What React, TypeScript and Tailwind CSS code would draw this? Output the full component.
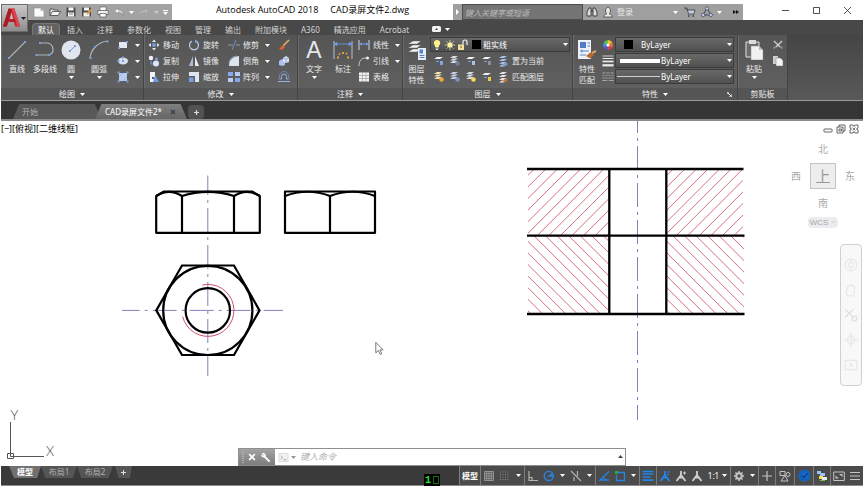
import type { ReactNode } from "react";

type IconProps = { children: ReactNode; size?: string; box?: string };

// Shared wrapper, small glyphs are drawn on a 12x12 grid
const Icon = ({ children, size = "size-3", box = "0 0 12 12" }: IconProps) => (
  <svg viewBox={box} className={`${size} shrink-0`} fill="none" aria-hidden="true">
    {children}
  </svg>
);

const Caret = ({ className = "text-white" }: { className?: string }) => (
  <svg viewBox="0 0 5 3" className={`h-[3px] w-[5px] shrink-0 ${className}`} aria-hidden="true">
    <path d="M0 0h5L2.5 3z" fill="currentColor" />
  </svg>
);

/* ---------- Quick access icons ---------- */

const NewIcon = () => (
  <Icon>
    <path d="M1 2h6.500l3.500 3v6H1z" fill="#fafafa" stroke="#8a8a8a" strokeWidth=".6" />
    <path d="M7.500 2v3H11z" fill="#bbb" />
  </Icon>
);
const OpenIcon = () => (
  <Icon>
    <path d="M1 9.500V3h3l1 1h4v2" stroke="#444" fill="#ddd" strokeWidth=".8" />
    <path d="M1 9.500 3.500 5.500h8L9 9.500z" fill="#f5f5f5" stroke="#444" strokeWidth=".8" />
  </Icon>
);
const SaveIcon = () => (
  <Icon>
    <path d="M1.500 1.500h9v9h-9z" fill="#4c4c4c" />
    <path d="M3.500 1.500h5v3h-5zM3 6.500h6v4H3z" fill="#f4f4f4" />
    <path d="M4 8h4" stroke="#666" strokeWidth=".8" />
  </Icon>
);
const SaveAsIcon = () => (
  <Icon>
    <path d="M1 1.500h9v9H1z" fill="#4c4c4c" />
    <path d="M3 1.500h5v3H3zM2.500 6.500h6v4h-6z" fill="#f4f4f4" />
    <path d="m6 8 4.500-4.500" stroke="#e2a33a" strokeWidth="1.800" />
  </Icon>
);
const PrintIcon = () => (
  <Icon>
    <path d="M3 1h6v4H3z" fill="#fff" stroke="#555" strokeWidth=".6" />
    <path d="M.8 4.500h10.400v4H.8z" fill="#f0f0f0" stroke="#555" strokeWidth=".7" />
    <path d="M3 7.500h6v3.500H3z" fill="#fff" stroke="#555" strokeWidth=".7" />
  </Icon>
);
const UndoIcon = () => (
  <Icon>
    <path d="M5 2 1.500 5 5 8V6c3 0 4.500 1 5 4 .8-4-1.500-6-5-6z" fill="#f0f0f0" stroke="#777" strokeWidth=".5" />
  </Icon>
);
const RedoIcon = () => (
  <Icon>
    <path d="M7 2l3.500 3L7 8V6C4 6 2.500 7 2 10c-.8-4 1.500-6 5-6z" fill="#b9b9b9" stroke="#999" strokeWidth=".4" />
  </Icon>
);

/* ---------- Ribbon icons ---------- */

const Dot = ({ x, y }: { x: number; y: number }) => (
  <rect x={x - 1} y={y - 1} width="2" height="2" fill="#7d9de0" />
);

const LineIcon = () => (
  <Icon size="size-5" box="0 0 20 20">
    <path d="M2 18 18 2" stroke="#aab4bd" strokeWidth="1.100" />
    <Dot x={2} y={18} />
    <Dot x={18} y={2} />
  </Icon>
);
const PolylineIcon = () => (
  <Icon size="size-5" box="0 0 20 20">
    <path d="M1 15h13c6-2 5-10-1-12H5" stroke="#aab4bd" strokeWidth="1.200" />
    <Dot x={1.500} y={15} />
    <Dot x={14} y={15} />
    <Dot x={5} y={3} />
  </Icon>
);
const CircleIcon = () => (
  <Icon size="size-5" box="0 0 20 20">
    <circle cx="10" cy="10" r="9.500" fill="#e1e6ee" />
    <path d="m10 10 4-4" stroke="#7195dc" />
    <Dot x={9} y={11} />
    <Dot x={14} y={6} />
  </Icon>
);
const ArcIcon = () => (
  <Icon size="size-5" box="0 0 20 20">
    <path d="M1 18C2 9 9 2 19 1" stroke="#aab4bd" strokeWidth="1.200" />
    <Dot x={1.500} y={18} />
    <Dot x={6} y={7} />
    <Dot x={18.500} y={1.500} />
  </Icon>
);
const RectIcon = () => (
  <Icon>
    <rect x="2" y="3" width="8" height="6" fill="#e3e8f0" />
    <Dot x={2} y={9} />
    <Dot x={10} y={3} />
  </Icon>
);
const EllipseIcon = () => (
  <Icon>
    <ellipse cx="6" cy="6" rx="5" ry="3.400" fill="#d6dfec" />
    <Dot x={6} y={6} />
    <Dot x={1.500} y={6} />
    <Dot x={6} y={2.500} />
  </Icon>
);
const HatchIcon = () => (
  <Icon>
    <rect x="2" y="2" width="8" height="8" fill="#b9cdf2" />
    <path d="m2 6 4-4M6 10l4-4" stroke="#8fabe0" strokeWidth=".7" />
    <Dot x={1.500} y={1.500} />
    <Dot x={10.500} y={1.500} />
    <Dot x={1.500} y={10.500} />
    <Dot x={10.500} y={10.500} />
  </Icon>
);
const MoveIcon = () => (
  <Icon>
    <path d="m6 .5 2 2.500H4zM6 11.500 4 9h4zM.5 6 3 4v4zM11.500 6 9 8V4z" fill="#e6e9ee" />
    <path d="M4.300 4.300h3.400v3.400H4.300z" fill="#7b9fe6" />
  </Icon>
);
const RotateIcon = () => (
  <Icon>
    <path d="M4 2.200A4.500 4.500 0 1 0 8 2.200" stroke="#b8c8e4" strokeWidth="1.300" />
    <path d="M7 .5v3.500l3-1.500z" fill="#7b9fe6" />
  </Icon>
);
const TrimIcon = () => (
  <Icon>
    <path d="M0 6h5M8 6h4" stroke="#8d9aab" />
    <path d="M4 11 8 1" stroke="#6f8fce" />
  </Icon>
);
const CopyIcon = () => (
  <Icon>
    <circle cx="3" cy="3" r="2.200" fill="#f0f2f6" />
    <circle cx="8.500" cy="4" r="1.500" fill="#7b9fe6" />
    <circle cx="8" cy="8.500" r="3" fill="#dbe4f3" />
    <path d="M3 6v3h2" stroke="#7b9fe6" />
  </Icon>
);
const MirrorIcon = () => (
  <Icon>
    <path d="M5 1v10H1z" fill="#aebdd6" />
    <path d="M7 1v10h4z" fill="#e8ebf0" />
  </Icon>
);
const FilletIcon = () => (
  <Icon>
    <path d="M1 11C1 5 4 2 11 1v10z" fill="#dde3ec" />
    <path d="M1 8C2 4 4 2 8 1" stroke="#8eabdf" />
  </Icon>
);
const StretchIcon = () => (
  <Icon>
    <path d="M2 1h5v10H2z" fill="#f2f4f7" />
    <path d="m7 4 4 7H5z" fill="#6f9be8" />
    <path d="M4 6h2v2H4z" fill="#555" />
  </Icon>
);
const ScaleIcon = () => (
  <Icon>
    <path d="M1 1h10v10H7V5H1z" fill="#dfe5ee" />
    <path d="M1 6.500h4.500V11H1z" fill="#7b9fe6" />
  </Icon>
);
const ArrayIcon = () => (
  <Icon>
    <path d="M0 1h5v4H0zM7 7h5v4H7z" fill="#86a9eb" />
    <path d="M7 1h5v4H7zM0 7h5v4H0z" fill="#b7ccf5" />
  </Icon>
);
const EraseIcon = () => (
  <Icon>
    <path d="m5 7 6-6" stroke="#e9b36a" strokeWidth="1.600" />
    <path d="m1 10 4-4 2 2-3 3z" fill="#e2632f" />
  </Icon>
);
const ExplodeIcon = () => (
  <Icon>
    <path d="m1 6 3-2 3 2v4l-3 1-3-1z" fill="#a9c2ee" />
    <path d="m5 3 3-2 3 2v4L8 8 5 7z" fill="#d5e0f4" />
    <path d="m5 3 3 1 3-1M8 4v4" stroke="#7493cc" strokeWidth=".6" />
  </Icon>
);
const OffsetIcon = () => (
  <Icon>
    <path d="M0 10.500h12M2 8h1.500V5.500a2.500 2.500 0 0 1 5 0V8H10" stroke="#8fb0ec" />
    <path d="M0 8h1.500V5a4.500 4.500 0 0 1 9 0v3H12" stroke="#7a93bf" strokeWidth=".7" />
  </Icon>
);
const DimensionIcon = () => (
  <Icon size="size-5" box="0 0 20 20">
    <path d="M1 1v18M19 1v18" stroke="#b9c0c8" />
    <path d="M1 4h18M1 4l3-1.500v3zM19 4l-3-1.500v3z" stroke="#6f9be8" fill="#6f9be8" strokeWidth=".8" />
    <path d="M4 17.500h2M6 13.500l1 1M10 12v2M13 14l1-1M14 17.500h2" stroke="#e9a23c" strokeWidth="1.900" />
  </Icon>
);
const LinearIcon = () => (
  <Icon>
    <path d="M1 1v10M11 1v10" stroke="#d0d6de" />
    <path d="M1 5h10" stroke="#6f9be8" />
    <path d="m1 5 3-1.500v3zM11 5 8 3.500v3z" fill="#6f9be8" />
  </Icon>
);
const LeaderIcon = () => (
  <Icon>
    <path d="M1 11c0-5 2-8 7-8" stroke="#c4cad2" />
    <circle cx="9.500" cy="3" r="1.500" fill="#f2f2f2" />
  </Icon>
);
const TableIcon = () => (
  <Icon>
    <path d="M1 1.500h10v9H1z" fill="#f2f2f2" />
    <path d="M1 4.500h10M1 7.500h10M4.500 2v9M8 2v9" stroke="#8a8f96" strokeWidth=".6" />
  </Icon>
);
const LayersBigIcon = () => (
  <Icon size="size-5" box="0 0 20 20">
    <path d="m1 4 5-3h8l-4 3zM1 8l5-3h8l-4 3zM1 12l5-3h8l-4 3z" fill="#f4f4f4" stroke="#5a5a5a" strokeWidth=".5" />
    <path d="M11 8h8v12h-8z" fill="#e9eef6" />
    <path d="M12.500 9.500h3.500v4h-3.500z" fill="#5682c9" />
    <path d="M12.500 15.500h5M12.500 17.500h5" stroke="#5b83bd" />
  </Icon>
);
const BulbIcon = () => (
  <Icon>
    <path d="M6 1a3 3 0 0 1 2 5.400V8H4V6.400A3 3 0 0 1 6 1z" fill="#fff08a" />
    <path d="M4.500 9h3M5 10.500h2" stroke="#e6e6e6" />
  </Icon>
);
const SunIcon = () => (
  <Icon>
    <circle cx="6" cy="6" r="2.700" fill="#fbf3a6" />
    <path d="M6 .8v2M6 9.200v2M.8 6h2M9.200 6h2M2.300 2.300l1.300 1.300M8.400 8.400l1.300 1.300M2.300 9.700l1.300-1.300M8.400 3.600l1.300-1.300" stroke="#efe9a5" strokeWidth=".8" />
  </Icon>
);
const UnlockIcon = () => (
  <Icon>
    <path d="M1 5.500h6V11H1z" fill="#f0e29a" />
    <path d="M6 5.500V3a2 2 0 0 1 4 0v3" stroke="#f4f4f4" strokeWidth="1.200" />
    <path d="M4 7v2" stroke="#6b6030" />
  </Icon>
);

// Small layer stack with a coloured badge in the corner
const LayerToolIcon = ({ badge, stack = "#d9e0ea" }: { badge: string; stack?: string }) => (
  <Icon>
    <path d="m1 3 3-2h5L6 3zM1 5.500l3-2h5l-3 2zM1 8l3-2h5L6 8z" fill={stack} />
    <circle cx="8.500" cy="8.500" r="2.300" fill={badge} />
  </Icon>
);
const LayerFlatIcon = ({ badge }: { badge: string }) => (
  <Icon>
    <path d="m1 4 3-2h6L7 4z" fill="#eef1f5" />
    <path d="M3 6.500h3" stroke="#7fa0dd" />
    <path d="M7 6h3v4H7z" fill={badge} />
  </Icon>
);
// Full stack used next to the labelled layer commands
const LayerStackIcon = ({ stack, badge }: { stack: string; badge: string }) => (
  <Icon>
    <path d="m2 3 3-2h5L7 3zM2 6l3-2h5L7 6zM2 9l3-2h5L7 9zM2 11.500l3-2h5l-3 2z" fill={stack} />
    <path d="m8 7 3 2-2 2H6z" fill={badge} />
  </Icon>
);
const MatchBigIcon = () => (
  <Icon size="size-5" box="0 0 20 20">
    <path d="M1 0h13v19H1z" fill="#eef2f8" />
    <path d="M3 2h6v6H3z" fill="#4f7cc6" />
    <path d="M10.500 3H13M10.500 6H13M3 11h9M5 9.500v3M3 15h6" stroke="#5682c9" />
    <path d="m9 16 5-4 3 3-4 3.500z" fill="#b86a2c" />
    <path d="m15 13 4-2" stroke="#e0a060" strokeWidth="2" />
  </Icon>
);
const ColorWheelIcon = () => (
  <Icon>
    <path d="M6 6V1a5 5 0 0 1 4.300 2.500z" fill="#f2c230" />
    <path d="m6 6 4.300-2.500a5 5 0 0 1 0 5z" fill="#e8772e" />
    <path d="m6 6 4.300 2.500A5 5 0 0 1 6 11z" fill="#d8404d" />
    <path d="M6 6v5a5 5 0 0 1-4.300-2.500z" fill="#6d4fc0" />
    <path d="M6 6 1.700 8.500a5 5 0 0 1 0-5z" fill="#3f8fe0" />
    <path d="M6 6 1.700 3.500A5 5 0 0 1 6 1z" fill="#5fc24a" />
    <circle cx="6" cy="6" r="1.600" fill="#fff" />
  </Icon>
);
const WeightIcon = () => (
  <Icon>
    <path d="M.5 1h11" stroke="#eee" strokeWidth=".8" />
    <path d="M.5 3.500h11" stroke="#eee" />
    <path d="M.5 6.500h11" stroke="#eee" strokeWidth="1.600" />
    <path d="M.5 10.300h11" stroke="#eee" strokeWidth="2.200" />
  </Icon>
);
const LinetypeIcon = () => (
  <Icon>
    <path d="M.5 2h11" stroke="#aaa" strokeDasharray="3 1" />
    <path d="M.5 4.500h11" stroke="#aaa" strokeDasharray="1 1" />
    <path d="M.5 7h11" stroke="#aaa" strokeDasharray="2 1" />
    <path d="M.5 9.500h11" stroke="#aaa" strokeDasharray="4 1 1 1" />
  </Icon>
);
const PasteIcon = () => (
  <Icon size="size-5" box="0 0 20 20">
    <path d="M2 2h13v15H2z" fill="#6c6c6c" stroke="#e4e4e4" />
    <path d="M5 0h7v4H5z" fill="#dcdcdc" />
    <path d="M7 6h8l4 4v10H7z" fill="#f1f1f1" stroke="#888" strokeWidth=".5" />
    <path d="M15 6v4h4z" fill="#b9b9b9" />
  </Icon>
);
const CutIcon = () => (
  <Icon>
    <path d="m2 2 6 6M10 2 4 8" stroke="#d0d0d0" strokeWidth="1.400" />
    <path d="M1.500 9.500 4 7.500M10.500 9.500 8 7.500" stroke="#8a8a8a" strokeWidth="1.800" />
  </Icon>
);
const CopyClipIcon = () => (
  <Icon>
    <path d="M1 1h5v8H1z" fill="#cfcfcf" />
    <path d="M4 3h4.500L11 5.500V11H4z" fill="#f5f5f5" stroke="#777" strokeWidth=".5" />
  </Icon>
);

/* ---------- Ribbon building blocks ---------- */

type ToolProps = { icon: ReactNode; label: string; className?: string; menu?: boolean };

const BigTool = ({ icon, label, className = "w-7", menu }: ToolProps) => (
  <button className={`flex shrink-0 flex-col items-center pt-[3px] ${className}`}>
    {icon}
    <span className="mt-[3px] leading-[11px]">{label}</span>
    {menu ? (
      <span className="mt-[2px]">
        <Caret />
      </span>
    ) : null}
  </button>
);

const SmallTool = ({ icon, label, className = "", menu }: ToolProps) => (
  <button className={`flex h-4 items-center gap-[3px] ${className}`}>
    {icon}
    <span className="whitespace-nowrap">{label}</span>
    {menu ? (
      <span className="ml-[3px]">
        <Caret />
      </span>
    ) : null}
  </button>
);

const IconTool = ({ icon, label, menu }: ToolProps) => (
  <button aria-label={label} className="flex h-4 items-center gap-[6px]">
    {icon}
    {menu ? <Caret /> : null}
  </button>
);

type PanelProps = { title: string; className: string; children: ReactNode; menu?: boolean; launcher?: boolean };

const Panel = ({ title, className, children, menu = true, launcher }: PanelProps) => (
  <section
    className={`flex shrink-0 flex-col border-r border-[#434343] bg-linear-to-b from-[#555555] to-[#626262] shadow-[inset_1px_0_0_#6b6b6b] ${className}`}
  >
    <div className="flex h-[53px] pt-[2px]">{children}</div>
    <div className="relative flex h-3 items-center justify-center gap-[5px] bg-[#555555]">
      <span>{title}</span>
      {menu ? <Caret /> : null}
      {launcher ? (
        <button aria-label="特性面板" className="absolute right-[5px]">
          <Icon size="size-[5px]" box="0 0 5 5">
            <path d="M0 0h2M0 0v2M1 1l3 3M5 2v3H2" stroke="#fff" />
          </Icon>
        </button>
      ) : null}
    </div>
  </section>
);

type ComboProps = { label: string; value: string; lead: ReactNode };

const Combo = ({ label, value, lead }: ComboProps) => (
  <div className="relative flex h-[15px] items-center border border-[#3c3c3c] bg-linear-to-b from-[#696969] to-[#505050]">
    {lead}
    <select aria-label={label} className="h-full min-w-0 flex-1 appearance-none bg-transparent p-0 text-white outline-none">
      <option>{value}</option>
    </select>
    <span className="pointer-events-none absolute right-px">
      <Caret />
    </span>
  </div>
);

const layerToolsTop = [
  { label: "关", icon: <LayerFlatIcon badge="#7ea8ee" /> },
  { label: "隔离", icon: <LayerToolIcon badge="#6d7f9c" /> },
  { label: "冻结", icon: <LayerFlatIcon badge="#a7c0f0" /> },
  { label: "锁定", icon: <LayerFlatIcon badge="#8a9099" /> },
];

const layerToolsBottom = [
  { label: "打开所有图层", icon: <LayerToolIcon badge="#f0a83c" stack="#f2e6b4" /> },
  { label: "取消隔离", icon: <LayerToolIcon badge="#7a93bf" stack="#c4d2ea" /> },
  { label: "解冻所有图层", icon: <LayerToolIcon badge="#f3d95c" /> },
  { label: "解锁", icon: <LayerFlatIcon badge="#eccb4a" /> },
];

const ribbonTabs = ["默认", "插入", "注释", "参数化", "视图", "管理", "输出", "附加模块", "A360", "精选应用", "Acrobat"];

const Header = () => (
  <header className="flex">
    <div className="flex w-[27px] shrink-0 flex-col pt-1">
      <button
        aria-label="应用程序菜单"
        className="flex h-7 items-center justify-between border border-[#6c6c6c] bg-linear-to-b from-[#c9c9c9] to-[#8e8e8e] pr-px"
      >
        <svg viewBox="0 0 20 22" className="h-[22px] w-5" aria-hidden="true">
          <path d="M1 20 7 1h6l6 19h-5l-1.500-5H7l-2 5z" fill="#c5202c" />
          <path d="M10 5 8 12h4z" fill="#b9b9b9" />
          <path d="M1 20 7 1l3 1-5 18zM6 15l8-3 1 3z" fill="#a81a26" />
          <path d="m10 1 3 0 6 19h-3z" fill="#e04450" />
        </svg>
        <Caret className="text-[#222]" />
      </button>
      <div className="flex-1 bg-[#474747]" />
    </div>

    <div className="min-w-0 flex-1">
      {/* Title bar */}
      <div className="flex h-5">
        <div className="mt-1 flex w-36 shrink-0 items-center bg-[#a3a3a3] pl-[5px]">
          <button aria-label="新建" className="w-4"><NewIcon /></button>
          <button aria-label="打开" className="w-4"><OpenIcon /></button>
          <button aria-label="保存" className="w-4"><SaveIcon /></button>
          <button aria-label="另存为" className="w-4"><SaveAsIcon /></button>
          <button aria-label="打印" className="w-4"><PrintIcon /></button>
          <button aria-label="放弃" className="flex w-[25px] items-center gap-1"><UndoIcon /><Caret /></button>
          <button aria-label="重做" className="flex w-[25px] items-center gap-1"><RedoIcon /><Caret className="text-[#ccc]" /></button>
          <button aria-label="自定义快速访问工具栏" className="flex flex-col items-center gap-px">
            <span className="h-px w-[5px] bg-white" />
            <Caret />
          </button>
        </div>
        <h1 className="flex flex-1 items-center justify-center gap-3 font-['Open_Sans','Noto_Sans_CJK_SC',sans-serif] text-[9px] whitespace-nowrap text-black">
          <span>Autodesk AutoCAD 2018</span>
          <span>CAD录屏文件2.dwg</span>
        </h1>
        <div className="mt-1 flex w-[290px] shrink-0 items-center bg-[#9f9f9f]">
          <svg viewBox="0 0 9 8" className="h-2 w-[9px]" aria-hidden="true">
            <path d="M3 1v6l3-3z" fill="#fff" />
          </svg>
          <input
            aria-label="搜索"
            placeholder="键入关键字或短语"
            className="h-full w-[121px] border border-[#4d4d4d] bg-[#747474] px-[2px] italic text-white outline-none placeholder:text-[#b9b9b9]"
          />
          <button aria-label="查找" className="ml-[3px]">
            <Icon>
              <path d="M1 10V6l2-4h2v8zM7 10V2h2l2 4v4z" fill="#ddd" stroke="#333" strokeWidth=".9" />
              <path d="M5 5h2" stroke="#333" />
            </Icon>
          </button>
          <button className="ml-1 flex items-center gap-[3px] text-[#e9e9e9]">
            <Icon>
              <path d="M1.500 11c0-2 2-2.500 3.200-3C3 6 3.200 1.300 6 1.300S9 6 7.300 8c1.200.5 3.200 1 3.200 3z" fill="#e8e8e8" stroke="#444" strokeWidth=".8" />
            </Icon>
            <span>登录</span>
          </button>
          <span className="ml-10"><Caret /></span>
          <button aria-label="应用商店" className="ml-[6px]">
            <Icon>
              <path d="M.5 2H3l1.500 6h5.500l1-4H3.500z" fill="#c9cfdb" stroke="#333b4d" strokeWidth=".8" />
              <path d="M4 10h1.500M8.500 10H10" stroke="#333b4d" strokeWidth="1.500" />
            </Icon>
          </button>
          <button aria-label="保持连接" className="ml-[5px] flex items-center gap-1">
            <Icon>
              <path d="M6 2 2 9h8z" stroke="#39445e" strokeWidth=".9" />
              <circle cx="6" cy="2.500" r="1.700" fill="#c6cfe4" stroke="#39445e" strokeWidth=".7" />
              <circle cx="2.200" cy="9" r="1.700" fill="#c6cfe4" stroke="#39445e" strokeWidth=".7" />
              <circle cx="9.800" cy="9" r="1.700" fill="#c6cfe4" stroke="#39445e" strokeWidth=".7" />
            </Icon>
            <Caret />
          </button>
          <button aria-label="更多" className="mr-1 ml-auto">
            <svg viewBox="0 0 6 6" className="size-[6px]" aria-hidden="true">
              <path d="M0 1v4l3-2zM3 1v4l3-2z" fill="#111" />
            </svg>
          </button>
        </div>
        <div className="ml-[26px] flex shrink-0 items-center text-[#222]">
          <button aria-label="最小化" className="flex w-8 justify-center">
            <Icon size="size-[9px]" box="0 0 9 9"><path d="M1 4.500h7" stroke="currentColor" strokeWidth=".8" /></Icon>
          </button>
          <button aria-label="最大化" className="flex w-[31px] justify-center">
            <Icon size="size-[9px]" box="0 0 9 9"><path d="M1.500 1.500h6v6h-6z" stroke="currentColor" strokeWidth=".8" /></Icon>
          </button>
          <button aria-label="关闭" className="flex w-[31px] justify-center">
            <Icon size="size-[9px]" box="0 0 9 9"><path d="m1 1 7 7M8 1 1 8" stroke="currentColor" strokeWidth=".8" /></Icon>
          </button>
        </div>
      </div>

      {/* Ribbon tabs */}
      <nav className="flex h-[15px] items-end bg-[#484848] pl-1">
        {ribbonTabs.map((tab, index) => (
          <button
            key={tab}
            className={
              index === 0
                ? "h-3 w-7 rounded-t-sm border border-b-0 border-[#777] bg-[#626262] leading-[10px] text-white"
                : "h-3 px-[7px] leading-[11px] whitespace-nowrap text-[#d4d4d4]"
            }
          >
            {tab}
          </button>
        ))}
        <button aria-label="最小化功能区" className="ml-4 flex h-3 items-center gap-1">
          <svg viewBox="0 0 9 6" className="h-[6px] w-[9px]" aria-hidden="true">
            <rect width="9" height="6" rx="1.500" fill="#f2f2f2" />
            <path d="m3 4 1.500-2L6 4z" fill="#444" />
          </svg>
          <Caret />
        </button>
      </nav>
    </div>
  </header>
);

const Ribbon = () => (
  <div className="flex h-[66px] overflow-hidden border-b border-[#9a9a9a] bg-linear-to-b from-[#454545] to-[#595959] text-[#ececec]">
    <Panel title="绘图" className="w-[143px]">
      <BigTool icon={<LineIcon />} label="直线" className="w-8" />
      <BigTool icon={<PolylineIcon />} label="多段线" className="w-6 whitespace-nowrap" />
      <BigTool icon={<CircleIcon />} label="圆" menu />
      <BigTool icon={<ArcIcon />} label="圆弧" menu />
      <div className="ml-1">
        <IconTool icon={<RectIcon />} label="矩形" menu />
        <IconTool icon={<EllipseIcon />} label="椭圆" menu />
        <IconTool icon={<HatchIcon />} label="图案填充" menu />
      </div>
    </Panel>

    <Panel title="修改" className="w-[154px]">
      <div className="ml-1 w-10">
        <SmallTool icon={<MoveIcon />} label="移动" />
        <SmallTool icon={<CopyIcon />} label="复制" />
        <SmallTool icon={<StretchIcon />} label="拉伸" />
      </div>
      <div className="w-10">
        <SmallTool icon={<RotateIcon />} label="旋转" />
        <SmallTool icon={<MirrorIcon />} label="镜像" />
        <SmallTool icon={<ScaleIcon />} label="缩放" />
      </div>
      <div className="w-[50px]">
        <SmallTool icon={<TrimIcon />} label="修剪" menu />
        <SmallTool icon={<FilletIcon />} label="倒角" menu />
        <SmallTool icon={<ArrayIcon />} label="阵列" menu />
      </div>
      <div>
        <IconTool icon={<EraseIcon />} label="删除" />
        <IconTool icon={<ExplodeIcon />} label="分解" />
        <IconTool icon={<OffsetIcon />} label="偏移" />
      </div>
    </Panel>

    <Panel title="注释" className="w-[105px]">
      <BigTool
        icon={<span className="h-5 font-['Liberation_Sans'] text-[23px] leading-5 text-[#e4e8ee]">A</span>}
        label="文字"
        className="w-8"
        menu
      />
      <BigTool icon={<DimensionIcon />} label="标注" className="w-[26px]" />
      <div className="ml-[2px]">
        <SmallTool icon={<LinearIcon />} label="线性" menu />
        <SmallTool icon={<LeaderIcon />} label="引线" menu />
        <SmallTool icon={<TableIcon />} label="表格" />
      </div>
    </Panel>

    <Panel title="图层" className="w-[170px]">
      <BigTool icon={<LayersBigIcon />} label="图层特性" className="w-[27px] px-[5px]" />
      <div className="min-w-0 flex-1 pr-[2px]">
        <Combo
          label="图层"
          value="粗实线"
          lead={
            <span className="flex items-center gap-px">
              <BulbIcon />
              <SunIcon />
              <UnlockIcon />
              <span className="mr-[2px] ml-[2px] size-[9px] bg-black" />
            </span>
          }
        />
        <div className="mt-px flex">
          {layerToolsTop.map((tool) => (
            <button key={tool.label} aria-label={tool.label} className="ml-[3px] flex h-4 w-[13px] items-center">
              {tool.icon}
            </button>
          ))}
          <SmallTool icon={<LayerStackIcon badge="#7a9bd0" stack="#a9c0ea" />} label="置为当前" className="ml-[3px]" />
        </div>
        <div className="flex">
          {layerToolsBottom.map((tool) => (
            <button key={tool.label} aria-label={tool.label} className="ml-[3px] flex h-4 w-[13px] items-center">
              {tool.icon}
            </button>
          ))}
          <SmallTool icon={<LayerStackIcon badge="#c4762f" stack="#e2e5ea" />} label="匹配图层" className="ml-[3px]" />
        </div>
      </div>
    </Panel>

    <Panel title="特性" className="w-[165px]" launcher>
      <BigTool icon={<MatchBigIcon />} label="特性匹配" className="w-[28px] px-[5px]" />
      <div className="flex w-[14px] flex-col items-center">
        <IconTool icon={<ColorWheelIcon />} label="颜色" />
        <IconTool icon={<WeightIcon />} label="线宽" />
        <IconTool icon={<LinetypeIcon />} label="线型" />
      </div>
      <div className="flex min-w-0 flex-1 flex-col gap-px pr-[3px]">
        <Combo label="对象颜色" value="ByLayer" lead={<span className="mr-2 ml-2 size-[9px] bg-black" />} />
        <Combo label="线宽" value="ByLayer" lead={<span className="mr-px ml-1 h-1 w-10 bg-white" />} />
        <Combo label="线型" value="ByLayer" lead={<span className="mr-px ml-px h-px w-[43px] bg-[#d0d0d0]" />} />
      </div>
    </Panel>

    <Panel title="剪贴板" className="w-[50px]" menu={false}>
      <BigTool icon={<PasteIcon />} label="粘贴" className="w-8" menu />
      <div className="ml-[2px]">
        <IconTool icon={<CutIcon />} label="剪切" />
        <IconTool icon={<CopyClipIcon />} label="复制裁剪" />
      </div>
    </Panel>
  </div>
);

const FileTabs = () => (
  <div className="flex h-5 items-end border-b-2 border-[#8b8b8b] bg-[#363636]">
    <button className="ml-3 h-[15px] w-[88px] bg-[#585858] pl-[9px] text-left text-[#b2b2b2] [clip-path:polygon(7%_0,93%_0,100%_100%,0_100%)]">
      开始
    </button>
    <div className="-ml-[6px] flex h-[15px] w-[92px] items-center bg-linear-to-b from-[#808080] to-[#666666] pl-[10px] text-white [clip-path:polygon(7%_0,93%_0,100%_100%,0_100%)]">
      <button className="whitespace-nowrap">CAD录屏文件2*</button>
      <button aria-label="关闭文件" className="ml-2 text-[#3c3c3c]">
        <Icon size="size-[6px]" box="0 0 6 6"><path d="m1 1 4 4M5 1 1 5" stroke="currentColor" strokeWidth="1.200" /></Icon>
      </button>
    </div>
    <button
      aria-label="新图形"
      className="ml-px flex h-[14px] w-4 items-center justify-center rounded-sm bg-[#525252] text-[#ddd]"
    >
      <Icon size="size-[7px]" box="0 0 7 7"><path d="M3.500 1v5M1 3.500h5" stroke="currentColor" strokeWidth="1.200" /></Icon>
    </button>
  </div>
);

/* ---------- Drawing ---------- */

const HATCH_STEP = 11.58;
const hatch = Array.from({ length: 32 }, (_, i) => i);
const CENTER_DASH = "24 5 3 5";

const Drawing = () => (
  <svg
    viewBox="1 121 862 345"
    preserveAspectRatio="xMinYMin meet"
    className="absolute inset-0 size-full"
    fill="none"
    role="img"
    aria-label="螺母三视图与连接板剖视图"
  >
    <defs>
      <clipPath id="upper-plate">
        <path d="M528 169h81v66h-81zM667 169h76v66h-76z" />
      </clipPath>
      <clipPath id="lower-plate">
        <path d="M528 236h81v77h-81zM667 236h77v77h-77z" />
      </clipPath>
    </defs>

    {/* hatching */}
    <g clipPath="url(#upper-plate)" stroke="#cf5f74" strokeWidth=".9">
      {hatch.map((i) => {
        const sum = 703.3 + HATCH_STEP * (i - 1);
        return <path key={i} d={`M${sum - 240} 240L${sum - 160} 160`} />;
      })}
    </g>
    <g clipPath="url(#lower-plate)" stroke="#cf5f74" strokeWidth=".9">
      {hatch.map((i) => {
        const diff = -286.6 + HATCH_STEP * (7 - i);
        return <path key={i} d={`M${230 - diff} 230L${320 - diff} 320`} />;
      })}
    </g>

    {/* centre lines */}
    <g stroke="#8280bd" strokeDasharray={CENTER_DASH}>
      <path d="M637.500 121V420" strokeDashoffset="12" />
      <path d="M207.800 175.500V376" strokeDashoffset="4.500" />
      <path d="M122 310.400H283" strokeDashoffset="6.300" />
    </g>

    {/* plates */}
    <g stroke="#000" strokeWidth="2.300">
      <path d="M527 169H743.500M527 235.700H744.500M527 314H744.500M609.300 169V314M666.300 169V314" />
    </g>

    {/* nut, front and side views */}
    <g stroke="#000" strokeWidth="2.200" strokeLinejoin="round">
      <path d="M156.200 232.800V196L164 191.500H252L259.800 196V232.800z" />
      <path d="M182 196V232.800M234 196V232.800" />
      <path d="M156.200 196Q169 187.800 182 196Q208 187.800 234 196Q247 187.800 259.800 196" />
      <path d="M285 191.500H375V232.800H285zM330 196V232.800" />
      <path d="M285 196Q307.500 187.500 330 196Q352.500 187.500 375 196" />
    </g>

    {/* nut, top view */}
    <g stroke="#000" strokeWidth="2.200">
      <path d="M156.300 310.400 182 265.500H234L259.500 310.400 234 355H182z" />
      <circle cx="207.800" cy="310.400" r="44.600" />
      <circle cx="207.800" cy="310.400" r="22.200" />
    </g>
    <path d="M202.300 285A26 26 0 1 1 182.700 316.700" stroke="#cf4f6c" />

    {/* UCS icon */}
    <g stroke="#555">
      <path d="M10.500 422V456.500H44" />
      <path d="M7.500 453.500h6v5h-6z" />
    </g>
    <g fill="#444" className="font-['Lato'] text-[13px] font-light">
      <text x="10.500" y="420">Y</text>
      <text x="46" y="456">X</text>
    </g>

    {/* cursor */}
    <path d="M375.800 342.300v10.500l2.500-2.300 2 4 1.500-.8-1.900-3.800h3.200z" fill="#fff" stroke="#555" strokeWidth=".8" />
  </svg>
);

const ViewCube = () => (
  <div className="absolute top-[22px] right-2 flex w-16 flex-col items-center text-[#a9a9a9]">
    <button className="text-[10px] leading-3">北</button>
    <div className="my-2 flex w-full items-center justify-between text-[10px]">
      <button>西</button>
      <button className="flex h-[26px] w-[26px] items-center justify-center border border-[#c4c4c4] bg-[#ededed] text-[15px] text-[#999]">
        上
      </button>
      <button>东</button>
    </div>
    <button className="text-[10px] leading-3">南</button>
    <button className="mt-2 flex h-[11px] w-[30px] items-center justify-center gap-[3px] rounded-sm bg-[#ebebf0] font-['Liberation_Sans'] text-[8px]">
      WCS
      <Caret className="text-[#dcdce0]" />
    </button>
  </div>
);

const NavBar = () => (
  <div className="absolute top-[123px] right-px flex h-[142px] w-[22px] flex-col items-center justify-around rounded-sm border border-[#d0d0d0] bg-[#f8f8f8] py-2 text-[#e8e8e8]">
    <button aria-label="全导航控制盘">
      <Icon size="size-[14px]"><circle cx="6" cy="6" r="5" stroke="currentColor" /><circle cx="6" cy="6" r="2" stroke="currentColor" /><path d="M6 1v3M6 8v3" stroke="currentColor" /></Icon>
    </button>
    <button aria-label="平移">
      <Icon size="size-[14px]"><path d="M3 11C1 8 2 6 3 6V3h1.500V2H6V1.500h1.500V3H9v5l-1 3z" stroke="currentColor" /></Icon>
    </button>
    <button aria-label="范围缩放" className="text-[#dedede]">
      <Icon size="size-[14px]"><path d="m1 1 7 7M8 1 1 8" stroke="currentColor" /><circle cx="9" cy="9" r="2" stroke="currentColor" /></Icon>
    </button>
    <button aria-label="动态观察">
      <Icon size="size-[14px]"><path d="M6 0v12M0 6h12" stroke="currentColor" /><ellipse cx="6" cy="6" rx="3" ry="3.500" stroke="currentColor" /></Icon>
    </button>
    <button aria-label="ShowMotion">
      <Icon size="size-[14px]"><path d="M1 2h10v8H1z" stroke="currentColor" /><path d="M5 4v4l3-2z" fill="currentColor" /></Icon>
    </button>
  </div>
);

const CommandLine = () => (
  <div className="absolute right-[237px] bottom-0 left-[237px] flex h-[18px] border border-[#8f8f8f] bg-white">
    <div className="flex w-9 shrink-0 items-center gap-[4px] bg-linear-to-b from-[#a3a3a3] to-[#7d7d7d] pl-[3px] text-white">
      <svg viewBox="0 0 2 11" className="h-[11px] w-[2px]" aria-hidden="true">
        <path d="M1 0v11" stroke="#d3d3d3" strokeDasharray="1 1" />
      </svg>
      <button aria-label="关闭命令行">
        <Icon size="size-2" box="0 0 7 7"><path d="m1 1 5 5M6 1 1 6" stroke="currentColor" strokeWidth="1.500" /></Icon>
      </button>
      <button aria-label="自定义">
        <Icon size="size-[11px]">
          <path d="m5 5 5.500 5.500" stroke="currentColor" strokeWidth="2" />
          <path d="M2 1.500 4 3.500 3.500 4 1.500 2.500C.5 4.500 2.500 6.500 5 6L6.500 4.500C6.500 2 4 .5 2 1.500z" fill="currentColor" />
        </Icon>
      </button>
    </div>
    <button aria-label="最近使用的命令" className="ml-[3px] flex items-center gap-[2px] text-[#aaa]">
      <Icon size="size-[11px]">
        <path d="M1 1.500h10v9H1z" fill="#f1f1f1" stroke="#cfcfcf" strokeWidth=".7" />
        <path d="m3 4 2 2-2 2M6 8.500h3" stroke="#999" strokeWidth=".9" />
      </Icon>
      <Caret className="text-[#999]" />
    </button>
    <input
      aria-label="命令"
      placeholder="键入命令"
      className="ml-1 min-w-0 flex-1 text-[9px] italic text-[#444] outline-none placeholder:text-[#b0b0b0]"
    />
    <button aria-label="展开历史记录" className="mr-[2px] flex rotate-180 items-center">
      <Caret className="text-[#444]" />
    </button>
  </div>
);

const DocControls = () => (
  <div className="absolute top-[3px] right-1 flex items-center gap-[3px] text-[#555]">
    <button aria-label="最小化视口">
      <Icon size="size-[10px]" box="0 0 10 10"><rect x="1" y="5" width="8" height="3" rx=".5" stroke="currentColor" strokeWidth=".9" /></Icon>
    </button>
    <button aria-label="还原视口">
      <Icon size="size-[10px]" box="0 0 10 10"><path d="M1 3h6v6H1zM3 3V1h6v6H7M3 5h2.500v2H3z" stroke="currentColor" strokeWidth=".9" /></Icon>
    </button>
    <button aria-label="关闭视口">
      <Icon size="size-[10px]" box="0 0 10 10"><path d="M1 1h3l1 1.500L6 1h3v3L7.500 5 9 6v3H6L5 7.500 4 9H1V6l1.500-1L1 4z" stroke="currentColor" strokeWidth=".9" /><path d="m3.500 3.500 3 3M6.500 3.500l-3 3" stroke="currentColor" strokeWidth=".8" /></Icon>
    </button>
  </div>
);

/* ---------- Status bar ---------- */

const StatusGroup = ({ children }: { children: ReactNode }) => (
  <div className="flex items-center border-l border-[#7d7d7d] bg-[#4b4b4b]">{children}</div>
);

type StatusProps = { label: string; children: ReactNode; className?: string };

const StatusButton = ({ label, children, className = "w-4" }: StatusProps) => (
  <button aria-label={label} className={`flex h-full items-center justify-center ${className}`}>
    {children}
  </button>
);

const StatusMenu = ({ label }: { label: string }) => (
  <StatusButton label={label} className="w-[11px]">
    <Caret />
  </StatusButton>
);

const BLUE = "#2384ea";

const PersonIcon = ({ color, mark }: { color: string; mark?: string }) => (
  <Icon>
    <path d="M6 1v5M6 5 1.500 11M6 5l4.500 6" stroke={color} strokeWidth="1.900" />
    <path d="M6 4 3.500 8.500h5z" fill={color} />
    {mark ? <path d={mark} stroke={color} strokeWidth="1.200" /> : null}
  </Icon>
);

const StatusBar = () => (
  <footer className="relative flex h-5 shrink-0 border-b border-[#8b8b8b] bg-[#3a3a3a]">
    <div className="flex items-start pl-2 text-[#b0b0b0]">
      <button className="h-3 w-8 bg-[#707070] leading-3 font-bold text-white [clip-path:polygon(0_0,100%_0,88%_100%,16%_100%)]">
        模型
      </button>
      <button className="h-3 w-9 bg-[#555555] leading-3 [clip-path:polygon(0_0,100%_0,88%_100%,12%_100%)]">布局1</button>
      <button className="h-3 w-9 bg-[#555555] leading-3 [clip-path:polygon(0_0,100%_0,88%_100%,12%_100%)]">布局2</button>
      <button
        aria-label="新建布局"
        className="ml-[2px] flex h-3 w-[17px] items-center justify-center bg-[#555555] text-[#ddd] [clip-path:polygon(0_0,100%_0,88%_100%,20%_100%)]"
      >
        <Icon size="size-[7px]" box="0 0 7 7"><path d="M3.500 1v5M1 3.500h5" stroke="currentColor" /></Icon>
      </button>
    </div>

    {/* frame counter of the recorder */}
    <div className="absolute bottom-[-1px] left-[423px] flex h-3 w-4 items-center justify-center gap-[2px] bg-black font-['Liberation_Mono'] text-[10px] font-bold text-[#2be52b]">
      <span>1</span>
      <span className="h-2 w-[6px] border border-[#156b15]" />
    </div>

    <div className="ml-auto flex text-[#c4c4c4]">
      <StatusGroup>
        <button className="w-5 font-bold whitespace-nowrap text-white">模型</button>
      </StatusGroup>
      <StatusGroup>
        <StatusButton label="显示栅格">
          <Icon><path d="M1.500 1.500h9v9h-9zM1.500 3.700h9M1.500 6h9M1.500 8.300h9M3.700 1.500v9M6 1.500v9M8.300 1.500v9" stroke="#9a9a9a" strokeWidth=".9" /></Icon>
        </StatusButton>
        <StatusButton label="捕捉模式">
          <Icon><path d="M1 2h10M1 4.500h10M1 7h10M1 9.500h10" stroke="#8b8b8b" strokeDasharray="1 1.500" /></Icon>
        </StatusButton>
        <StatusMenu label="捕捉设置" />
      </StatusGroup>
      <StatusGroup>
        <StatusButton label="正交">
          <Icon><path d="M2 1v9.500h9M2 7.500h3v3" stroke="#b4b4b4" strokeWidth="1.200" /></Icon>
        </StatusButton>
        <StatusButton label="极轴追踪">
          <Icon><circle cx="5.800" cy="6" r="4.600" stroke={BLUE} strokeWidth="1.300" /><path d="M10 3 6 6h5" stroke={BLUE} strokeWidth="1.300" /></Icon>
        </StatusButton>
        <StatusMenu label="极轴设置" />
        <StatusButton label="等轴测草图">
          <Icon><path d="m1 1 10 10M7.500 1v5M4 7v4" stroke="#b4b4b4" strokeWidth="1.200" /></Icon>
        </StatusButton>
        <StatusMenu label="等轴测设置" />
      </StatusGroup>
      <StatusGroup>
        <StatusButton label="对象捕捉追踪">
          <Icon><path d="M11 1.500 2 10h9" stroke={BLUE} strokeWidth="1.400" /><path d="M5 7l3 3" stroke={BLUE} /></Icon>
        </StatusButton>
        <StatusButton label="对象捕捉">
          <Icon><path d="M4 2.500h6.500v8h-8V5" stroke={BLUE} strokeWidth="1.300" /><path d="M1 1h3v3H1z" fill="#1fae45" /></Icon>
        </StatusButton>
        <StatusMenu label="对象捕捉设置" />
      </StatusGroup>
      <StatusGroup>
        <StatusButton label="显示线宽">
          <Icon><path d="M.5 1.500h11M.5 4h11M.5 7h8M.5 10.200h11" stroke={BLUE} strokeWidth="1.700" /></Icon>
        </StatusButton>
      </StatusGroup>
      <StatusGroup>
        <StatusButton label="注释可见性"><PersonIcon color={BLUE} mark="M8 2h3M8 4.500h2" /></StatusButton>
        <StatusButton label="自动缩放"><PersonIcon color="#cccccc" mark="M8 3h3M9.500 1.500v3" /></StatusButton>
        <StatusButton label="注释比例"><PersonIcon color="#cccccc" /></StatusButton>
        <button className="flex w-[25px] items-center justify-center gap-[3px] text-white">
          1:1
          <Caret />
        </button>
      </StatusGroup>
      <StatusGroup>
        <StatusButton label="切换工作空间">
          <Icon size="size-[10px]">
            <circle cx="6" cy="6" r="3.200" stroke="currentColor" strokeWidth="2.400" />
            <path d="M6 0v2.500M6 9.500V12M0 6h2.500M9.500 6H12M1.800 1.800l1.700 1.700M8.500 8.500l1.700 1.700M1.800 10.200l1.700-1.700M8.500 3.500l1.700-1.700" stroke="currentColor" strokeWidth="1.800" />
          </Icon>
        </StatusButton>
        <StatusMenu label="工作空间" />
      </StatusGroup>
      <StatusGroup>
        <StatusButton label="注释监视器">
          <Icon><path d="M6 1v10M1 6h10" stroke="currentColor" strokeWidth="1.200" /></Icon>
        </StatusButton>
      </StatusGroup>
      <StatusGroup>
        <StatusButton label="隔离对象" className="w-[18px]">
          <Icon><path d="M1 1.500h5v4H1zM4 8l2-2.500L9 11H2z" stroke="currentColor" /><circle cx="9" cy="4.500" r="2" stroke="currentColor" /></Icon>
        </StatusButton>
      </StatusGroup>
      <StatusGroup>
        <StatusButton label="图形性能" className="w-[18px]">
          <Icon size="size-[13px]"><circle cx="6" cy="6" r="5.600" fill="#1668c7" /><path d="m3.500 6 2 2 3.500-4" stroke="#0b3f86" strokeWidth="1.200" /><circle cx="6" cy="6" r="4" stroke="#0f56ad" strokeWidth=".7" /></Icon>
        </StatusButton>
      </StatusGroup>
      <StatusGroup>
        <StatusButton label="联机">
          <Icon><path d="M1 1h4v2h4v3H4V4H1z" fill="#9dc3f2" /><path d="M3 6h4v3H3z" fill="#f2e04c" /><path d="M6 7h5v3H6z" fill="#e8eef5" /><path d="M4 10.500h5" stroke="#7bc043" /></Icon>
        </StatusButton>
      </StatusGroup>
      <StatusGroup>
        <StatusButton label="全屏显示">
          <Icon><path d="M.7 2h10.600v8.500H.7z" stroke="currentColor" /><path d="M6 4h3.500v3zM6 8.500H2.500v-3z" fill="currentColor" /></Icon>
        </StatusButton>
        <StatusButton label="自定义">
          <Icon><path d="M1 2.500h10M1 6h10M1 9.500h10" stroke="currentColor" strokeWidth="1.200" /></Icon>
        </StatusButton>
      </StatusGroup>
    </div>
  </footer>
);

const App = () => {
  return (
    <div className="flex h-screen flex-col bg-white px-px font-['Noto_Sans','Noto_Sans_CJK_SC',sans-serif] text-[8px]">
      <Header />
      <Ribbon />
      <FileTabs />
      <main className="relative min-h-0 flex-1 overflow-hidden bg-white">
        <Drawing />
        <p className="relative flex pt-px text-[9px] text-black">
          <button>[−]</button>
          <button>[俯视]</button>
          <button>[二维线框]</button>
        </p>
        <DocControls />
        <ViewCube />
        <NavBar />
        <CommandLine />
      </main>
      <StatusBar />
    </div>
  );
};

export default App;
